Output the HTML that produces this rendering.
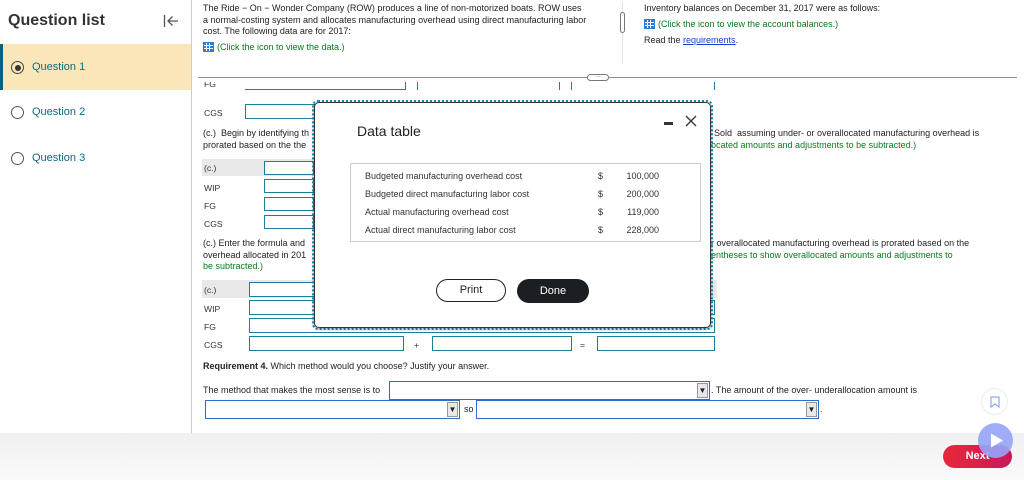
<!DOCTYPE html>
<html><head><meta charset="utf-8"><style>
*{margin:0;padding:0;box-sizing:border-box}
body{width:1024px;height:480px;overflow:hidden;background:#fff;font-family:"Liberation Sans",Arial,sans-serif;position:relative;color:#222}
.a{position:absolute;white-space:nowrap}
.s{font-size:9px;line-height:11.5px}
.g{color:#0a7a1a}
.inp{position:absolute;border:1px solid #1a7f9a;background:#fff}
.lab{position:absolute;font-size:8.6px;color:#333}
.sel{position:absolute;border:1px solid #2a6fd0;background:#fff}
.sel i{position:absolute;right:1px;top:1px;bottom:1px;width:11px;background:#e8e8e8;border:1px solid #999;font-style:normal;font-size:8px;text-align:center;line-height:14px}
.ic{display:inline-block;width:11px;height:10px;background:#2a7fd4;border:1px solid #2a7fd4;background-image:linear-gradient(#fff 0 0),linear-gradient(#fff 0 0),linear-gradient(#fff 0 0),linear-gradient(#fff 0 0);background-size:9px 1px,9px 1px,1px 8px,1px 8px;background-position:0 2px,0 5px,2px 0,5px 0;background-repeat:no-repeat;vertical-align:-2px;margin-right:3px}
</style></head><body>
<div class="a" style="left:8px;top:12px;font-size:16px;font-weight:bold;color:#333">Question list</div>
<svg class="a" style="left:163px;top:14px" width="16" height="14"><path d="M1.5 1v12M15 7H5M9.5 2.5L5 7l4.5 4.5" stroke="#555" stroke-width="1.3" fill="none"/></svg>
<div class="a" style="left:0;top:44px;width:192px;height:46px;background:#fae7b9"></div>
<div class="a" style="left:0;top:44px;width:3px;height:46px;background:#0c5f7a"></div>
<div class="a" style="left:11px;top:61px;width:13px;height:13px;border:1.5px solid #444;border-radius:50%"></div>
<div class="a" style="left:14.5px;top:64.5px;width:6px;height:6px;background:#333;border-radius:50%"></div>
<div class="a" style="left:32px;top:61px;font-size:11px;color:#0c6b80">Question 1</div>
<div class="a" style="left:11px;top:106px;width:13px;height:13px;border:1.5px solid #555;border-radius:50%"></div>
<div class="a" style="left:32px;top:106px;font-size:11px;color:#0c6b80">Question 2</div>
<div class="a" style="left:11px;top:152px;width:13px;height:13px;border:1.5px solid #555;border-radius:50%"></div>
<div class="a" style="left:32px;top:152px;font-size:11px;color:#0c6b80">Question 3</div>
<div class="a" style="left:191px;top:0;width:1px;height:433px;background:#c8ccd4"></div>

<div class="a s" style="left:203px;top:3px">The Ride − On − Wonder Company (ROW) produces a line of non-motorized boats. ROW uses<br>a normal-costing system and allocates manufacturing overhead using direct manufacturing labor<br>cost. The following data are for 2017:</div>
<div class="a s g" style="left:203px;top:42px"><span class="ic"></span>(Click the icon to view the data.)</div>
<div class="a" style="left:622px;top:2px;width:1px;height:62px;background:#e4e4e4"></div>
<div class="a" style="left:620px;top:12px;width:5px;height:21px;border:1px solid #777;border-radius:3px;background:#fff"></div>
<div class="a s" style="left:644px;top:3px">Inventory balances on December 31, 2017 were as follows:</div>
<div class="a s g" style="left:644px;top:19px"><span class="ic"></span>(Click the icon to view the account balances.)</div>
<div class="a s" style="left:644px;top:35px">Read the <span style="color:#1a3fd0;text-decoration:underline">requirements</span>.</div>
<div class="a" style="left:198px;top:77px;width:819px;height:1px;background:#8a8f9a"></div>
<div class="a" style="left:587px;top:74px;width:22px;height:7px;border:1px solid #777;border-radius:4px;background:#fff;font-size:6px;line-height:4px;text-align:center">···</div>

<div class="a" style="left:198px;top:82px;width:520px;height:8px;overflow:hidden">
<div class="lab" style="left:6px;top:-3px">FG</div>
<div class="a" style="left:47px;top:0;width:160px;height:8px;border-bottom:1px solid #1a7f9a"></div>
<div class="a" style="left:207px;top:0;width:1px;height:8px;background:#1a7f9a"></div>
<div class="a" style="left:219px;top:0;width:1px;height:8px;background:#1a7f9a"></div>
<div class="a" style="left:361px;top:0;width:1px;height:8px;background:#1a7f9a"></div>
<div class="a" style="left:373px;top:0;width:1px;height:8px;background:#1a7f9a"></div>
<div class="a" style="left:516px;top:0;width:1px;height:8px;background:#1a7f9a"></div>
</div>
<div class="lab" style="left:204px;top:108px">CGS</div>
<div class="inp" style="left:245px;top:104px;width:70px;height:15px"></div>

<div class="a s" style="left:203px;top:128px">(c.)&nbsp; Begin by identifying th<br>prorated based on the the</div>
<div class="a" style="left:202px;top:159px;width:112px;height:17px;background:#e8e8e8"></div>
<div class="lab" style="left:204px;top:163px">(c.)</div>
<div class="inp" style="left:264px;top:161px;width:50px;height:14px"></div>
<div class="lab" style="left:204px;top:183px">WIP</div>
<div class="inp" style="left:264px;top:179px;width:50px;height:14px"></div>
<div class="lab" style="left:204px;top:201px">FG</div>
<div class="inp" style="left:264px;top:197px;width:50px;height:14px"></div>
<div class="lab" style="left:204px;top:219px">CGS</div>
<div class="inp" style="left:264px;top:215px;width:50px;height:14px"></div>

<div class="a s" style="left:203px;top:238px">(c.) Enter the formula and<br>overhead allocated in 201<br><span class="g">be subtracted.)</span></div>
<div class="a" style="left:202px;top:280px;width:515px;height:18px;background:#e8e8e8"></div>
<div class="lab" style="left:204px;top:285px">(c.)</div>
<div class="inp" style="left:249px;top:282px;width:70px;height:15px"></div>
<div class="lab" style="left:204px;top:304px">WIP</div>
<div class="inp" style="left:249px;top:300px;width:466px;height:15px"></div>
<div class="lab" style="left:204px;top:322px">FG</div>
<div class="inp" style="left:249px;top:318px;width:466px;height:15px"></div>
<div class="lab" style="left:204px;top:340px">CGS</div>
<div class="inp" style="left:249px;top:336px;width:155px;height:15px"></div>
<div class="lab" style="left:414px;top:340px">+</div>
<div class="inp" style="left:432px;top:336px;width:140px;height:15px"></div>
<div class="lab" style="left:580px;top:340px">=</div>
<div class="inp" style="left:597px;top:336px;width:118px;height:15px"></div>

<div class="a s" style="left:714px;top:128px">Sold&nbsp; assuming under- or overallocated manufacturing overhead is</div>
<div class="a s g" style="left:711px;top:140px">ocated amounts and adjustments to be subtracted.)</div>
<div class="a s" style="left:711px;top:238px">r overallocated manufacturing overhead is prorated based on the</div>
<div class="a s g" style="left:711px;top:250px">entheses to show overallocated amounts and adjustments to</div>

<div class="a s" style="left:203px;top:361px"><b>Requirement 4.</b> Which method would you choose? Justify your answer.</div>
<div class="a s" style="left:203px;top:385px">The method that makes the most sense is to</div>
<div class="sel" style="left:389px;top:381px;width:321px;height:19px"><i>▼</i></div>
<div class="a s" style="left:711px;top:385px">. The amount of the over- underallocation amount is</div>
<div class="sel" style="left:205px;top:400px;width:255px;height:19px"><i>▼</i></div>
<div class="a s" style="left:464px;top:404px">so</div>
<div class="sel" style="left:476px;top:400px;width:343px;height:19px"><i>▼</i></div>
<div class="a s" style="left:820px;top:404px">.</div>

<div class="a" style="left:312px;top:100px;width:401px;height:230px;border:2px dotted #1a8fc0;border-radius:6px"></div>
<div class="a" style="left:314px;top:102px;width:397px;height:226px;background:#fff;border:1.5px solid #333;border-radius:5px;box-shadow:0 1px 3px rgba(0,0,0,.4)"></div>
<div class="a" style="left:357px;top:123px;font-size:14px;color:#222">Data table</div>
<div class="a" style="left:664px;top:122px;width:9px;height:3px;background:#333"></div>
<svg class="a" style="left:685px;top:115px" width="12" height="12"><path d="M1 1l10 10M11 1L1 11" stroke="#333" stroke-width="1.3"/></svg>
<div class="a" style="left:350px;top:163px;width:351px;height:79px;border:1px solid #ccc"></div>
<div class="a" style="left:365px;top:167px;font-size:9px;line-height:18px;color:#333">Budgeted manufacturing overhead cost<br>Budgeted direct manufacturing labor cost<br>Actual manufacturing overhead cost<br>Actual direct manufacturing labor cost</div>
<div class="a" style="left:598px;top:167px;font-size:9px;line-height:18px;color:#333">$<br>$<br>$<br>$</div>
<div class="a" style="left:615px;top:167px;width:44px;text-align:right;font-size:9px;line-height:18px;color:#333">100,000<br>200,000<br>119,000<br>228,000</div>
<div class="a" style="left:436px;top:279px;width:70px;height:23px;border:1.5px solid #222;border-radius:12px;text-align:center;line-height:20px;font-size:11px;color:#222">Print</div>
<div class="a" style="left:517px;top:279px;width:72px;height:24px;background:#1b1f24;border-radius:12px;text-align:center;line-height:24px;font-size:11px;color:#fff">Done</div>

<div class="a" style="left:0;top:433px;width:1024px;height:47px;background:linear-gradient(#f0f0f0,#fafafa)"></div>
<div class="a" style="left:982px;top:389px;width:25px;height:25px;border-radius:50%;background:#fff;box-shadow:0 0 2px rgba(0,0,0,.2)"></div>
<svg class="a" style="left:990px;top:396px" width="10" height="12"><path d="M1 1h8v10L5 8 1 11z" stroke="#8fa8f0" stroke-width="1.2" fill="none"/></svg>
<div class="a" style="left:943px;top:445px;width:69px;height:23px;border-radius:12px;background:linear-gradient(90deg,#e8283c,#c81858);color:#fff;font-weight:bold;font-size:11px;text-align:center;line-height:23px">Next</div>
<div class="a" style="left:978px;top:423px;width:35px;height:35px;border-radius:50%;background:rgba(150,165,250,.9)"></div>
<svg class="a" style="left:989px;top:432px" width="16" height="17"><path d="M2 1.5v14l12-7z" fill="#fff"/></svg>
</body></html>
